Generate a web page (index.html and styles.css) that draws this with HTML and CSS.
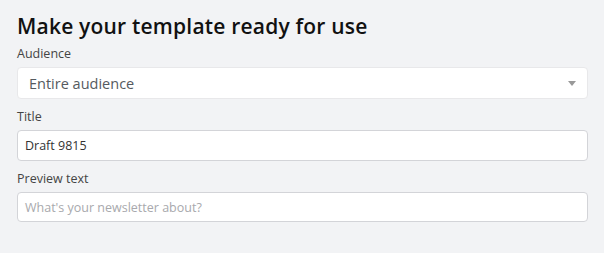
FILE: index.html
```html
<!DOCTYPE html>
<html>
<head>
<meta charset="utf-8">
<link rel="stylesheet" href="styles.css">
</head>
<body>
<div class="page">
  <h1 class="title">Make your template ready for use</h1>
  <div class="field field-first">
    <label class="label">Audience</label>
    <div class="select">
      <span class="select-value">Entire audience</span>
      <span class="caret"></span>
    </div>
  </div>
  <div class="field">
    <label class="label">Title</label>
    <div class="input"><span class="input-value">Draft 9815</span></div>
  </div>
  <div class="field">
    <label class="label">Preview text</label>
    <div class="input input-short"><span class="placeholder">What's your newsletter about?</span></div>
  </div>
</div>
</body>
</html>
```
FILE: styles.css
```css
html, body {
  margin: 0;
  padding: 0;
  background: #f2f3f5;
}
.page {
  width: 571px;
  padding: 12px 16px 0 17px;
  font-family: "Open Sans", "DejaVu Sans", sans-serif;
  display: flex;
  flex-direction: column;
}
.title {
  margin: 0;
  font-size: 21px;
  font-weight: 600;
  color: #111;
  line-height: 28px;
  letter-spacing: 0.2px;
}
.field {
  display: flex;
  flex-direction: column;
}
.label {
  font-size: 12.5px;
  color: #444;
  line-height: 17px;
  margin-top: 9px;
  margin-bottom: 5px;
}
.field-first .label {
  margin-top: 5px;
}
.select {
  height: 32px;
  box-sizing: border-box;
  background: #fff;
  border: 1px solid #e8e8ea;
  border-radius: 4px;
  display: flex;
  align-items: center;
  justify-content: space-between;
  padding: 0 11px 0 11px;
}
.select-value {
  font-size: 14.5px;
  color: #555a60;
}
.caret {
  width: 0;
  height: 0;
  border-left: 4.5px solid transparent;
  border-right: 4.5px solid transparent;
  border-top: 5px solid #999;
}
.input {
  height: 31px;
  box-sizing: border-box;
  background: #fff;
  border: 1px solid #d3d4d8;
  border-radius: 4px;
  display: flex;
  align-items: center;
  padding: 0 7px;
  font-size: 12.5px;
}
.input-short { height: 30px; }
.input-value { color: #333; }
.placeholder { color: #a8a9ad; }
```
